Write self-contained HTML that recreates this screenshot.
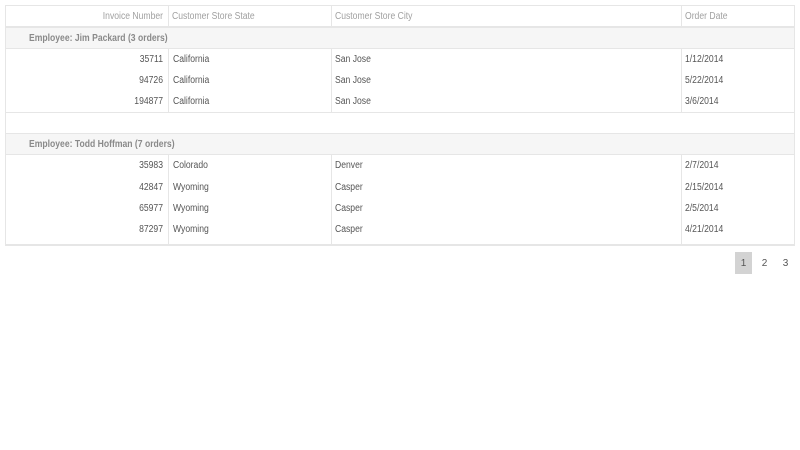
<!DOCTYPE html>
<html><head><meta charset="utf-8">
<style>
html,body{margin:0;padding:0;width:800px;height:450px;background:#fff;overflow:hidden}
body{position:relative;font-family:"Liberation Sans",sans-serif;font-size:10px;color:#555}
.b{position:absolute;background:#e6e6e6}
.t{position:absolute;white-space:nowrap;line-height:14px;height:14px;transform:scaleX(.86);transform-origin:0 50%}
.r{text-align:right;left:20px;width:143px;transform-origin:100% 50%}
.c{transform:none}
.h{color:#a0a0a0}
.g{color:#8a8a8a;font-weight:bold;left:29px}
.f{position:absolute;left:6px;width:788px;background:#f6f6f6}
</style></head><body>
<div class="f" style="top:28px;height:20px"></div>
<div class="f" style="top:134px;height:20px"></div>
<div class="b" style="left:5px;top:5px;width:790px;height:1px"></div>
<div class="b" style="left:5px;top:5px;width:1px;height:241px"></div>
<div class="b" style="left:794px;top:5px;width:1px;height:241px"></div>
<div class="b" style="left:5px;top:26px;width:790px;height:2px"></div>
<div class="b" style="left:5px;top:48px;width:790px;height:1px"></div>
<div class="b" style="left:5px;top:112px;width:790px;height:1px"></div>
<div class="b" style="left:5px;top:133px;width:790px;height:1px"></div>
<div class="b" style="left:5px;top:154px;width:790px;height:1px"></div>
<div class="b" style="left:5px;top:244px;width:790px;height:2px"></div>
<div class="b" style="left:168px;top:5px;width:1px;height:22px"></div>
<div class="b" style="left:331px;top:5px;width:1px;height:22px"></div>
<div class="b" style="left:681px;top:5px;width:1px;height:22px"></div>
<div class="b" style="left:168px;top:49px;width:1px;height:63px"></div>
<div class="b" style="left:331px;top:49px;width:1px;height:63px"></div>
<div class="b" style="left:681px;top:49px;width:1px;height:63px"></div>
<div class="b" style="left:168px;top:155px;width:1px;height:90px"></div>
<div class="b" style="left:331px;top:155px;width:1px;height:90px"></div>
<div class="b" style="left:681px;top:155px;width:1px;height:90px"></div>

<div class="t r h" style="top:10px">Invoice Number</div>
<div class="t h" style="left:172px;top:10px">Customer Store State</div>
<div class="t h" style="left:335px;top:10px">Customer Store City</div>
<div class="t h" style="left:685px;top:10px">Order Date</div>

<div class="t g" style="top:32px">Employee: Jim Packard (3 orders)</div>

<div class="t r" style="top:53px">35711</div>
<div class="t" style="left:173px;top:53px">California</div>
<div class="t" style="left:335px;top:53px">San Jose</div>
<div class="t" style="left:685px;top:53px">1/12/2014</div>

<div class="t r" style="top:74px">94726</div>
<div class="t" style="left:173px;top:74px">California</div>
<div class="t" style="left:335px;top:74px">San Jose</div>
<div class="t" style="left:685px;top:74px">5/22/2014</div>

<div class="t r" style="top:95px">194877</div>
<div class="t" style="left:173px;top:95px">California</div>
<div class="t" style="left:335px;top:95px">San Jose</div>
<div class="t" style="left:685px;top:95px">3/6/2014</div>

<div class="t g" style="top:138px">Employee: Todd Hoffman (7 orders)</div>

<div class="t r" style="top:159px">35983</div>
<div class="t" style="left:173px;top:159px">Colorado</div>
<div class="t" style="left:335px;top:159px">Denver</div>
<div class="t" style="left:685px;top:159px">2/7/2014</div>

<div class="t r" style="top:181px">42847</div>
<div class="t" style="left:173px;top:181px">Wyoming</div>
<div class="t" style="left:335px;top:181px">Casper</div>
<div class="t" style="left:685px;top:181px">2/15/2014</div>

<div class="t r" style="top:202px">65977</div>
<div class="t" style="left:173px;top:202px">Wyoming</div>
<div class="t" style="left:335px;top:202px">Casper</div>
<div class="t" style="left:685px;top:202px">2/5/2014</div>

<div class="t r" style="top:223px">87297</div>
<div class="t" style="left:173px;top:223px">Wyoming</div>
<div class="t" style="left:335px;top:223px">Casper</div>
<div class="t" style="left:685px;top:223px">4/21/2014</div>

<div style="position:absolute;left:735px;top:252px;width:17px;height:22px;background:#d3d3d3"></div>
<div class="t c" style="left:735px;width:17px;text-align:center;top:257px">1</div>
<div class="t c" style="left:756px;width:17px;text-align:center;top:257px">2</div>
<div class="t c" style="left:777px;width:17px;text-align:center;top:257px">3</div>
</body></html>
